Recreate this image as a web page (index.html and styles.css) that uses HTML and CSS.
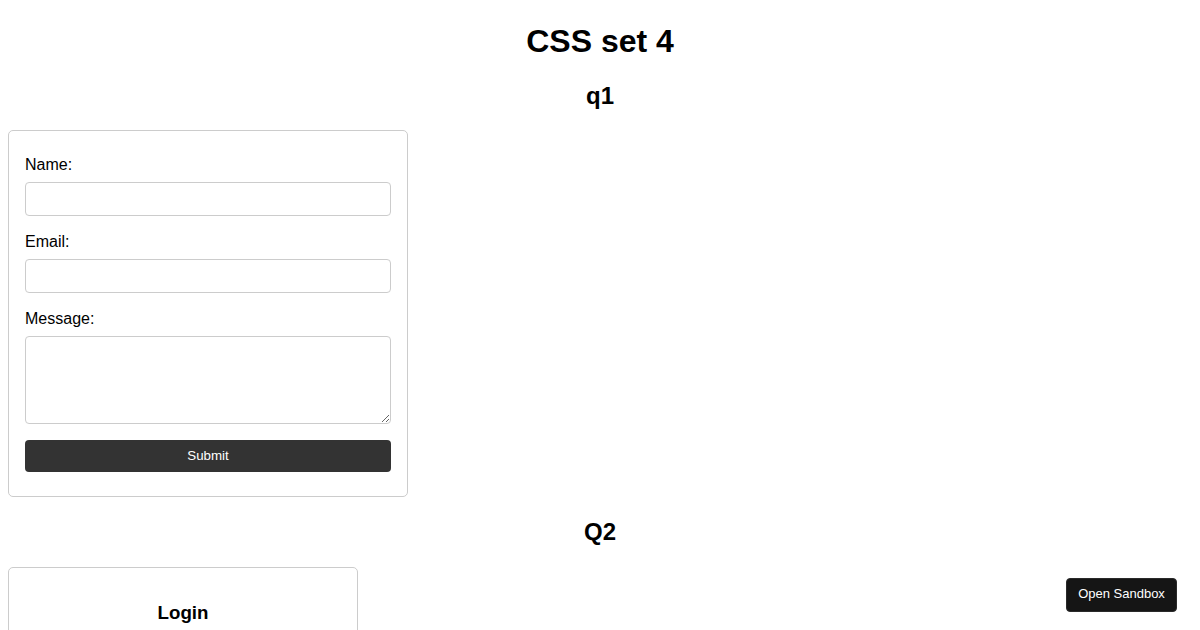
FILE: index.html
```html
<!DOCTYPE html>
<html lang="en">
<head>
<meta charset="utf-8">
<title>CSS set 4</title>
<link rel="stylesheet" href="styles.css">
</head>
<body>
<main class="page">
  <h1 class="title">CSS set 4</h1>
  <h2 class="section-title q1">q1</h2>
  <form class="card contact-form">
    <label class="field-label" for="name">Name:</label>
    <input class="field-input" id="name" type="text">
    <label class="field-label" for="email">Email:</label>
    <input class="field-input" id="email" type="email">
    <label class="field-label" for="message">Message:</label>
    <textarea class="field-input field-area" id="message"></textarea>
    <button class="submit-btn" type="button">Submit</button>
  </form>
  <h2 class="section-title q2">Q2</h2>
  <section class="card login-card">
    <h3 class="login-title">Login</h3>
  </section>
</main>
<button class="sandbox-btn" type="button">Open Sandbox</button>
</body>
</html>
```
FILE: styles.css
```css
html, body {
  margin: 0;
  padding: 0;
  background: #fff;
  overflow: hidden;
}
body {
  font-family: "Liberation Sans", Arial, sans-serif;
  color: #000;
  height: 630px;
}
.page {
  display: flex;
  flex-direction: column;
  align-items: flex-start;
  padding: 0 8px;
}
.title {
  align-self: stretch;
  text-align: center;
  font-size: 32px;
  line-height: 37px;
  font-weight: bold;
  margin: 23px 0 0;
}
.section-title {
  align-self: stretch;
  text-align: center;
  font-size: 24px;
  line-height: 28px;
  font-weight: bold;
  margin: 0;
}
.q1 {
  margin: 22px 0 20px;
}
.q2 {
  margin: 21px 0 21px;
}
.card {
  border: 1px solid #ccc;
  border-radius: 5px;
  box-sizing: border-box;
  background: #fff;
}
.contact-form {
  width: 400px;
  padding: 24px 16px;
  display: flex;
  flex-direction: column;
}
.field-label {
  font-size: 16px;
  line-height: 18px;
  padding-top: 1px;
  margin-bottom: 8px;
}
.field-input {
  box-sizing: border-box;
  width: 100%;
  height: 34px;
  padding: 8px;
  font-family: "Liberation Sans", Arial, sans-serif;
  font-size: 16px;
  border: 1px solid #ccc;
  border-radius: 4px;
  margin: 0 0 16px;
  background: #fff;
}
.field-area {
  height: 88px;
  resize: vertical;
  display: block;
}
.submit-btn {
  height: 32px;
  width: 100%;
  padding: 0 0 2px;
  border: none;
  border-radius: 4px;
  background: #333;
  color: #fff;
  font-family: "Liberation Sans", Arial, sans-serif;
  font-size: 13.33px;
  cursor: pointer;
}
.login-card {
  width: 350px;
  height: 120px;
  padding: 34px 20px 0;
}
.login-title {
  margin: 0;
  text-align: center;
  font-size: 18.72px;
  line-height: 22px;
  font-weight: bold;
}
.sandbox-btn {
  position: fixed;
  right: 23px;
  bottom: 18px;
  width: 111px;
  height: 34px;
  padding: 0 0 4px;
  border: 1px solid #2a2a2a;
  border-radius: 4px;
  background: #151515;
  color: #fff;
  font-family: "Liberation Sans", Arial, sans-serif;
  font-size: 13px;
}
```
